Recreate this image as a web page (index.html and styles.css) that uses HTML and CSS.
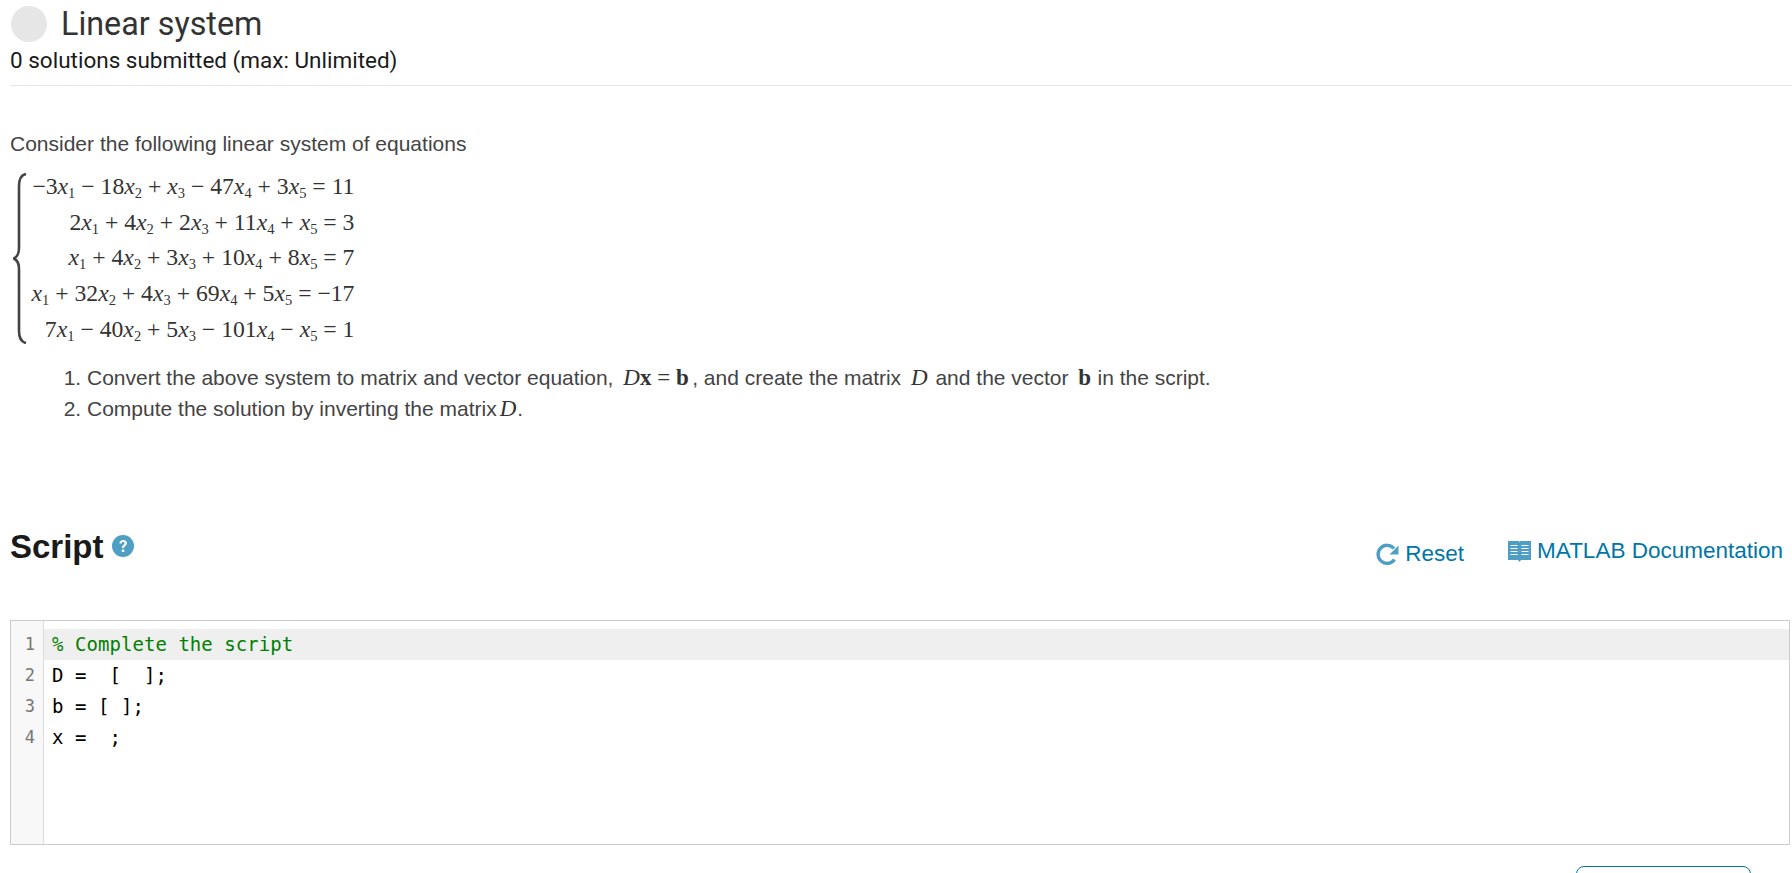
FILE: index.html
```html
<!DOCTYPE html>
<html lang="en">
<head>
<meta charset="utf-8">
<title>Linear system</title>
<link rel="stylesheet" href="styles.css">
</head>
<body>
<header class="head">
  <div class="title-row"><span class="status"></span><h1>Linear system</h1></div>
  <p class="count">0 solutions submitted (max: Unlimited)</p>
</header>
<section class="problem">
  <p class="intro">Consider the following linear system of equations</p>
  <div class="system">
    <svg class="brace" width="16" height="171" viewBox="0 0 16 171"><path d="M13 1C8 2 6 6 6 13V75C6 81 4 84 1 85.5C4 87 6 90 6 96V158C6 165 8 169 13 170" fill="none" stroke="#444" stroke-width="2.6"/></svg>
    <div class="eqs">
      <div>−3<i>x</i><sub>1</sub> − 18<i>x</i><sub>2</sub> + <i>x</i><sub>3</sub> − 47<i>x</i><sub>4</sub> + 3<i>x</i><sub>5</sub> = 11</div>
      <div>2<i>x</i><sub>1</sub> + 4<i>x</i><sub>2</sub> + 2<i>x</i><sub>3</sub> + 11<i>x</i><sub>4</sub> + <i>x</i><sub>5</sub> = 3</div>
      <div><i>x</i><sub>1</sub> + 4<i>x</i><sub>2</sub> + 3<i>x</i><sub>3</sub> + 10<i>x</i><sub>4</sub> + 8<i>x</i><sub>5</sub> = 7</div>
      <div><i>x</i><sub>1</sub> + 32<i>x</i><sub>2</sub> + 4<i>x</i><sub>3</sub> + 69<i>x</i><sub>4</sub> + 5<i>x</i><sub>5</sub> = −17</div>
      <div>7<i>x</i><sub>1</sub> − 40<i>x</i><sub>2</sub> + 5<i>x</i><sub>3</sub> − 101<i>x</i><sub>4</sub> − <i>x</i><sub>5</sub> = 1</div>
    </div>
  </div>
  <ol class="steps">
    <li>Convert the above system to matrix and vector equation, <span class="m lead eq-main"><i>D</i><b>x</b> = <b>b</b></span>, and create the matrix <span class="m lead trail-d"><i>D</i></span> and the vector <span class="m lead trail-b"><b>b</b></span> in the script.</li>
    <li>Compute the solution by inverting the matrix<span class="m tight"><i>D</i></span>.</li>
  </ol>
</section>
<section class="script-head">
  <div class="script-title"><h2>Script</h2>
    <svg class="help" width="22" height="22" viewBox="0 0 22 22"><circle cx="11" cy="11" r="11" fill="#4f9fc4"/><path d="M7.4 8.4C7.6 6.3 9 5 11.2 5C13.4 5 15 6.3 15 8.2C15 10.7 12.2 10.8 12.2 13H9.9C9.9 10 12.5 9.8 12.5 8.3C12.5 7.5 12 7.1 11.1 7.1C10.2 7.1 9.8 7.7 9.7 8.6Z M9.8 14.4H12.3V16.9H9.8Z" fill="#fff"/></svg>
  </div>
  <nav class="actions">
    <a class="action reset">
      <svg width="23" height="23" viewBox="0 0 23 23"><path d="M18.5 16.5A9 9 0 1 1 18 5.5" fill="none" stroke="#4f9fc4" stroke-width="3.4"/><path d="M22.5 2.5V11.5H13.5Z" fill="#4f9fc4"/></svg>
      Reset</a>
    <a class="action doc">
      <svg width="23" height="22" viewBox="0 0 23 22"><path d="M0 1H10.8L11.5 2L12.2 1H23V20H13L11.5 22L10 20H0Z" fill="#4f9fc4"/><path d="M2.5 5.5H9.5M2.5 8.5H9.5M2.5 11.5H9.5M2.5 14.5H9.5M13.5 5.5H20.5M13.5 8.5H20.5M13.5 11.5H20.5M13.5 14.5H20.5" stroke="#fff" stroke-width="1.2"/></svg>
      MATLAB Documentation</a>
  </nav>
</section>
<div class="editor">
  <div class="gutter"><span>1</span><span>2</span><span>3</span><span>4</span></div>
  <div class="code">
    <div class="line active"><span class="comment">% Complete the script</span></div>
    <div class="line">D =  [  ];</div>
    <div class="line">b = [ ];</div>
    <div class="line">x =  ;</div>
  </div>
</div>
<div class="foot"><span class="submit"></span></div>
</body>
</html>
```
FILE: styles.css
```css
html, body { margin: 0; padding: 0; }
html { overflow: hidden; }
body { height: 873px; overflow: hidden; background: #fff; font-family: "Liberation Sans", Arial, sans-serif; color: #444; }
h1, h2, p, ol { margin: 0; padding: 0; }
.head { margin-left: 10px; height: 85px; border-bottom: 1px solid #e6e6e6; }
.title-row { display: flex; align-items: center; padding-top: 6px; height: 36px; }
.status { width: 36px; height: 36px; border-radius: 50%; background: #e6e6e6; margin-left: 1px; }
h1 { font: 400 32.3px/36px Roboto, sans-serif; color: #333; margin-left: 14px; }
.count { font: 400 22.5px/24px Roboto, sans-serif; color: #1a1a1a; margin-top: 6px; }
.problem { margin-left: 10px; }
.intro { font-size: 21px; line-height: 24px; margin-top: 46px; }
.system { display: flex; margin-top: 13px; margin-left: 3px; height: 178px; }
.brace { flex: none; margin-top: 4px; }
.eqs { font: 23.7px/35.7px "Liberation Serif", serif; text-align: right; color: #333; margin-left: 2.5px; white-space: nowrap; }
.eqs sub { font-size: 14.5px; line-height: 0; vertical-align: -4px; }
.steps { list-style: decimal; margin: 15px 0 0 53px; padding-left: 24px; font-size: 21px; line-height: 31px; }
.steps li { white-space: nowrap; }
.m { font: 23px "Liberation Serif", serif; color: #333; }
.lead { margin-left: 4px; }
.eq-main { margin-right: 3.5px; }
.trail-d { margin-right: 2px; }
.trail-b { margin-right: .5px; }
.tight { margin: 0 1px 0 3px; }
.script-head { display: flex; justify-content: space-between; margin: 100px 9px 0 10px; align-items: flex-start; height: 80px; }
.script-title { display: flex; align-items: center; gap: 8px; height: 46px; }
.help { margin-top: -3px; }
h2 { font-size: 33px; font-weight: 700; color: #1a1a1a; }
.actions { display: flex; gap: 44px; align-items: flex-start; padding-top: 4px; }
.action { display: flex; align-items: center; gap: 6px; font-size: 22.5px; color: #0076a8; white-space: nowrap; height: 46px; }
.reset { margin-top: 3px; }
.editor { display: flex; margin: 16px 2px 0 10px; height: 225px; border: 1px solid #ccc; box-sizing: border-box; }
.gutter { width: 33px; background: #f8f8f8; border-right: 1px solid #ddd; padding-top: 8px; box-sizing: border-box; flex: none; }
.gutter span { display: block; height: 31px; text-align: right; padding-right: 8px; font: 17px/31px "DejaVu Sans Mono", monospace; color: #777; }
.code { flex: 1; padding-top: 8px; }
.line { height: 31px; font: 19px/31px "DejaVu Sans Mono", monospace; letter-spacing: .05px; color: #000; padding-left: 8px; white-space: pre; }
.line.active { background: #efefef; }
.comment { color: #007f00; }
.foot { display: flex; justify-content: flex-end; margin: 21px 41px 0 0; }
.submit { width: 175px; height: 40px; border: 1px solid #0076a8; border-radius: 8px; box-sizing: border-box; }
```
